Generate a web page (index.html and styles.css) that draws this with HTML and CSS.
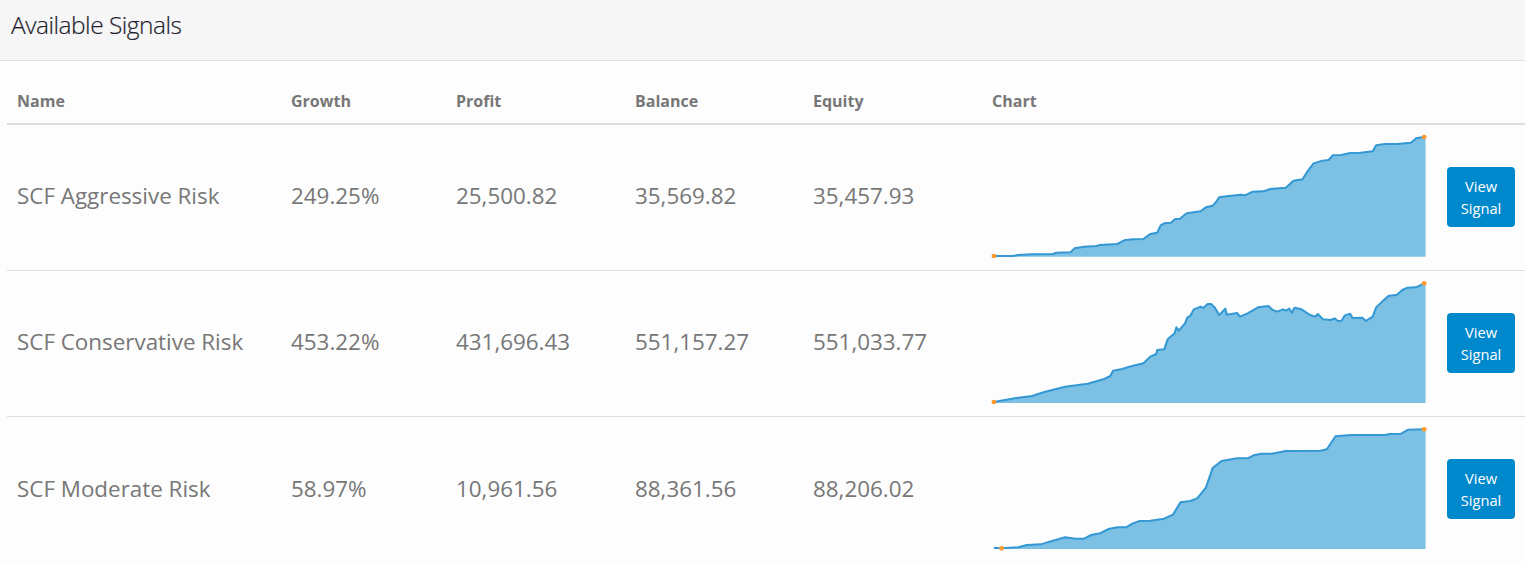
FILE: index.html
```html
<!DOCTYPE html>
<html lang="en">
<head>
    <meta charset="UTF-8">
    <title>Available Signals</title>
    <link rel="stylesheet" href="styles.css">
</head>
<body>
    <div class="panel-heading">
        <h2>Available Signals</h2>
    </div>
    <div class="panel-body">
        <table class="signals">
            <thead>
                <tr>
                    <th class="col-name">Name</th>
                    <th class="col-growth">Growth</th>
                    <th class="col-profit">Profit</th>
                    <th class="col-balance">Balance</th>
                    <th class="col-equity">Equity</th>
                    <th class="col-chart">Chart</th>
                    <th></th>
                </tr>
            </thead>
            <tbody>
                <tr>
                    <td>SCF Aggressive Risk</td>
                    <td>249.25%</td>
                    <td>25,500.82</td>
                    <td>35,569.82</td>
                    <td>35,457.93</td>
                    <td class="chart-cell">
                        <svg class="spark" viewBox="28.8 36 1266 390" preserveAspectRatio="none">
                            <path class="area" d="M40,410 L40,408 95,408 110,405 150,403 210,402 220,398 260,397 272,385 300,380 335,378 345,375 395,372 415,361 440,358 470,357 490,342 510,338 520,316 530,310 550,308 560,298 575,296 595,280 635,274 650,262 670,257 680,245 688,232 710,229 750,224 762,226 785,215 815,214 835,207 880,203 902,182 928,178 945,150 960,130 985,122 1003,120 1015,106 1040,105 1065,99 1095,98 1130,94 1140,76 1165,72 1200,72 1240,68 1255,55 1278,51 1282,51 1282,410 Z"/>
                            <polyline class="line" points="40,408 95,408 110,405 150,403 210,402 220,398 260,397 272,385 300,380 335,378 345,375 395,372 415,361 440,358 470,357 490,342 510,338 520,316 530,310 550,308 560,298 575,296 595,280 635,274 650,262 670,257 680,245 688,232 710,229 750,224 762,226 785,215 815,214 835,207 880,203 902,182 928,178 945,150 960,130 985,122 1003,120 1015,106 1040,105 1065,99 1095,98 1130,94 1140,76 1165,72 1200,72 1240,68 1255,55 1278,51"/>
                            <ellipse class="dot" cx="40" cy="408" rx="7" ry="7"/>
                            <ellipse class="dot" cx="1278" cy="51" rx="7" ry="7"/>
                        </svg>
                    </td>
                    <td class="action-cell"><a class="btn" href="#">View Signal</a></td>
                </tr>
                <tr>
                    <td>SCF Conservative Risk</td>
                    <td>453.22%</td>
                    <td>431,696.43</td>
                    <td>551,157.27</td>
                    <td>551,033.77</td>
                    <td class="chart-cell">
                        <svg class="spark" viewBox="28.8 24 1266 390" preserveAspectRatio="none">
                            <path class="area" d="M40,399 L40,396 100,385 150,378 185,366 245,350 310,341 355,328 375,318 383,302 410,297 430,290 470,280 490,260 507,252 510,240 530,238 540,208 560,190 565,172 572,182 590,160 597,142 605,138 615,118 635,110 642,114 655,102 665,102 675,112 688,135 695,128 706,116 710,134 740,129 748,140 770,130 800,112 830,108 842,120 855,125 872,118 880,122 890,116 897,128 905,113 925,118 950,135 965,140 972,132 987,148 1010,150 1020,145 1030,153 1040,152 1050,136 1065,131 1072,144 1100,143 1110,153 1130,140 1140,112 1160,92 1175,78 1200,74 1215,60 1230,53 1255,52 1278,40 1282,40 1282,399 Z"/>
                            <polyline class="line" points="40,396 100,385 150,378 185,366 245,350 310,341 355,328 375,318 383,302 410,297 430,290 470,280 490,260 507,252 510,240 530,238 540,208 560,190 565,172 572,182 590,160 597,142 605,138 615,118 635,110 642,114 655,102 665,102 675,112 688,135 695,128 706,116 710,134 740,129 748,140 770,130 800,112 830,108 842,120 855,125 872,118 880,122 890,116 897,128 905,113 925,118 950,135 965,140 972,132 987,148 1010,150 1020,145 1030,153 1040,152 1050,136 1065,131 1072,144 1100,143 1110,153 1130,140 1140,112 1160,92 1175,78 1200,74 1215,60 1230,53 1255,52 1278,40"/>
                            <ellipse class="dot" cx="40" cy="396" rx="7" ry="7"/>
                            <ellipse class="dot" cx="1278" cy="40" rx="7" ry="7"/>
                        </svg>
                    </td>
                    <td class="action-cell"><a class="btn" href="#">View Signal</a></td>
                </tr>
                <tr>
                    <td>SCF Moderate Risk</td>
                    <td>58.97%</td>
                    <td>10,961.56</td>
                    <td>88,361.56</td>
                    <td>88,206.02</td>
                    <td class="chart-cell">
                        <svg class="spark" viewBox="28.8 27 1266 390" preserveAspectRatio="none">
                            <path class="area" d="M40,402 L40,398 62,400 110,397 135,390 175,388 200,380 245,367 275,371 300,371 320,360 345,355 370,342 395,337 420,337 440,325 460,318 490,317 530,311 555,299 577,262 605,258 625,250 650,218 670,158 695,138 740,130 770,130 790,120 810,116 840,116 880,108 980,107 998,103 1023,64 1070,60 1165,60 1180,57 1212,56 1232,44 1278,43 1282,43 1282,402 Z"/>
                            <polyline class="line" points="40,398 62,400 110,397 135,390 175,388 200,380 245,367 275,371 300,371 320,360 345,355 370,342 395,337 420,337 440,325 460,318 490,317 530,311 555,299 577,262 605,258 625,250 650,218 670,158 695,138 740,130 770,130 790,120 810,116 840,116 880,108 980,107 998,103 1023,64 1070,60 1165,60 1180,57 1212,56 1232,44 1278,43"/>
                            <ellipse class="dot" cx="62" cy="400" rx="7" ry="7"/>
                            <ellipse class="dot" cx="1278" cy="43" rx="7" ry="7"/>
                        </svg>
                    </td>
                    <td class="action-cell"><a class="btn" href="#">View Signal</a></td>
                </tr>
            </tbody>
        </table>
    </div>
</body>
</html>
```

FILE: styles.css
```css
* {
    box-sizing: border-box;
}

body {
    margin: 0;
    background-color: #fdfdfd;
    font-family: "Open Sans", Arial, sans-serif;
    color: #777;
}

.panel-heading {
    height: 61px;
    padding: 0 11px;
    background-color: #f6f6f6;
    border-bottom: 1px solid #ddd;
}

.panel-heading h2 {
    margin: 0;
    font-size: 24.5px;
    font-weight: 300;
    line-height: 50px;
    letter-spacing: -0.5px;
    color: #1f1f2e;
    -webkit-text-stroke: 0.2px #1f1f2e;
}

.panel-body {
    padding-left: 7px;
}

.signals {
    width: 100%;
    border-collapse: separate;
    border-spacing: 0;
    table-layout: fixed;
}

.signals th {
    padding: 30px 10px 12px;
    font-size: 16px;
    font-weight: 700;
    line-height: 20px;
    text-align: left;
    border-bottom: 2px solid #ddd;
}

.col-name { width: 274px; }
.col-growth { width: 165px; }
.col-profit { width: 179px; }
.col-balance { width: 178px; }
.col-equity { width: 179px; }
.col-chart { width: 465px; }

.signals td {
    height: 146px;
    padding: 0 10px 3px;
    font-size: 22.4px;
    line-height: 30px;
    vertical-align: middle;
    border-bottom: 1px solid #ddd;
    white-space: nowrap;
}

.signals tr:last-child td {
    border-bottom: none;
}

.signals .chart-cell {
    padding: 0 0 2px 8px;
}

.spark {
    display: block;
    width: 440px;
    height: 130px;
    filter: blur(0.35px);
}

.area {
    fill: #7cc0e3;
}

.line {
    fill: none;
    stroke: #3398d4;
    stroke-width: 6;
    stroke-linejoin: round;
}

.dot {
    fill: #ff9a2e;
}

.signals .action-cell {
    padding: 0 0 2px;
}

.btn {
    display: block;
    width: 68px;
    padding: 8px 6px;
    background-color: #0088cc;
    border-radius: 4px;
    color: #fff;
    font-size: 14.7px;
    line-height: 22px;
    text-align: center;
    text-decoration: none;
    white-space: normal;
}
```
